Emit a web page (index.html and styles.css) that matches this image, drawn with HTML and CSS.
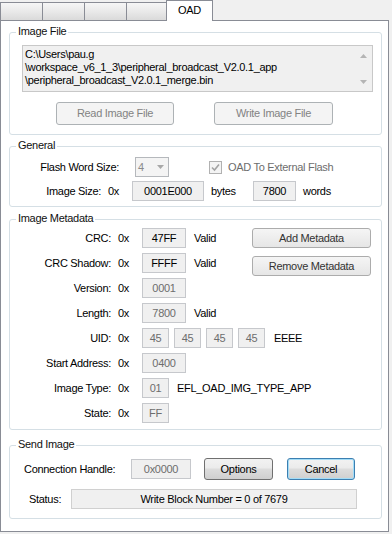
FILE: index.html
```html
<!DOCTYPE html>
<html lang="en">
<head>
    <meta charset="UTF-8">
    <title>OAD</title>
    <link rel="stylesheet" href="styles.css">
</head>
<body>

<!-- tab strip -->
<div class="tabs">
    <div class="tab"></div>
    <div class="tab"></div>
    <div class="tab"></div>
    <div class="tab tab-last"></div>
    <div class="tab tab-active">OAD</div>
</div>

<div class="page">

    <!-- Image File -->
    <div class="group group-file">
        <span class="legend">Image File</span>
        <div class="filebox">
            <div class="filepath">C:\Users\pau.g<br>\workspace_v6_1_3\peripheral_broadcast_V2.0.1_app<br>\peripheral_broadcast_V2.0.1_merge.bin</div>
            <div class="scroll">
                <svg width="7" height="4" viewBox="0 0 7 4"><polygon points="0,4 3.5,0 7,4" fill="#b4b4b4"/></svg>
                <svg width="7" height="4" viewBox="0 0 7 4"><polygon points="0,0 3.5,4 7,0" fill="#b4b4b4"/></svg>
            </div>
        </div>
        <div class="file-buttons">
            <button class="btn btn-disabled btn-read">Read Image File</button>
            <button class="btn btn-disabled btn-write">Write Image File</button>
        </div>
    </div>

    <!-- General -->
    <div class="group group-general">
        <span class="legend">General</span>
        <div class="row">
            <span class="lbl lbl-flash">Flash Word Size:</span>
            <div class="combo">
                <span class="combo-text">4</span>
                <svg width="7" height="4" viewBox="0 0 7 4"><polygon points="0,0 3.5,4 7,0" fill="#a8a8a8"/></svg>
            </div>
            <span class="check">
                <svg width="13" height="13" viewBox="0 0 13 13">
                    <rect x="0.5" y="0.5" width="12" height="12" fill="#f4f4f4" stroke="#b1b1b1"/>
                    <path d="M3 6.5 L5.5 9 L10 3.5" fill="none" stroke="#a3a3a3" stroke-width="1.6"/>
                </svg>
            </span>
            <span class="check-label">OAD To External Flash</span>
        </div>
        <div class="row">
            <span class="lbl lbl-size">Image Size:</span>
            <span class="ox ox-size">0x</span>
            <span class="tb w72">0001E000</span>
            <span class="unit">bytes</span>
            <span class="tb w43">7800</span>
            <span class="unit-words">words</span>
        </div>
    </div>

    <!-- Image Metadata -->
    <div class="group group-meta">
        <span class="legend">Image Metadata</span>
        <div class="meta-rows">
            <div class="mrow">
                <span class="mlabel">CRC:</span><span class="ox">0x</span>
                <span class="tb w44">47FF</span><span class="after">Valid</span>
            </div>
            <div class="mrow">
                <span class="mlabel">CRC Shadow:</span><span class="ox">0x</span>
                <span class="tb w44">FFFF</span><span class="after">Valid</span>
            </div>
            <div class="mrow">
                <span class="mlabel">Version:</span><span class="ox">0x</span>
                <span class="tb tb-dis w44">0001</span>
            </div>
            <div class="mrow">
                <span class="mlabel">Length:</span><span class="ox">0x</span>
                <span class="tb tb-dis w44">7800</span><span class="after">Valid</span>
            </div>
            <div class="mrow">
                <span class="mlabel">UID:</span><span class="ox">0x</span>
                <span class="uid">
                    <span class="tb tb-dis w27">45</span>
                    <span class="tb tb-dis w27">45</span>
                    <span class="tb tb-dis w27">45</span>
                    <span class="tb tb-dis w27">45</span>
                </span>
                <span class="after-uid">EEEE</span>
            </div>
            <div class="mrow">
                <span class="mlabel">Start Address:</span><span class="ox">0x</span>
                <span class="tb tb-dis w44">0400</span>
            </div>
            <div class="mrow">
                <span class="mlabel">Image Type:</span><span class="ox">0x</span>
                <span class="tb tb-dis w27">01</span><span class="after">EFL_OAD_IMG_TYPE_APP</span>
            </div>
            <div class="mrow">
                <span class="mlabel">State:</span><span class="ox">0x</span>
                <span class="tb tb-dis w27">FF</span>
            </div>
        </div>
        <div class="meta-buttons">
            <button class="btn btn-light">Add Metadata</button>
            <button class="btn btn-light">Remove Metadata</button>
        </div>
    </div>

    <!-- Send Image -->
    <div class="group group-send">
        <span class="legend">Send Image</span>
        <div class="srow">
            <span class="lbl-conn">Connection Handle:</span>
            <span class="tb tb-dis w60">0x0000</span>
            <button class="btn btn-normal btn-options">Options</button>
            <button class="btn btn-normal btn-focus btn-cancel">Cancel</button>
        </div>
        <div class="srow srow-status">
            <span class="lbl-status">Status:</span>
            <span class="status-box">Write Block Number = 0 of 7679</span>
        </div>
    </div>

</div>

</body>
</html>
```

FILE: styles.css
```css
body {
    margin: 0;
    background-color: #f0f0f0;
    font-family: "Liberation Sans", Arial, sans-serif;
    font-size: 11px;
    line-height: 13px;
    letter-spacing: -0.3px;
    color: #000000;
}

/* tab strip */
.tabs {
    display: flex;
    align-items: flex-end;
    height: 20px;
}

.tab {
    width: 42px;
    height: 18px;
    box-sizing: border-box;
    border-left: 1px solid #898c95;
    border-top: 1px solid #898c95;
    background: linear-gradient(#f6f6f6, #e9e9e9 50%, #dadada);
}

.tab-last {
    width: 40px;
}

.tab-active {
    position: relative;
    z-index: 1;
    width: 47px;
    height: 21px;
    margin-bottom: -1px;
    border: 1px solid #898c95;
    border-bottom: none;
    background: #ffffff;
    text-align: center;
    line-height: 19px;
}

/* tab page */
.page {
    width: 389px;
    height: 512px;
    box-sizing: border-box;
    border: 1px solid #898c95;
    background-color: #ffffff;
    padding-left: 8px;
}

/* group boxes */
.group {
    position: relative;
    width: 373px;
    box-sizing: border-box;
    border: 1px solid #d5dfe5;
    border-radius: 3px;
}

.legend {
    position: absolute;
    top: -8px;
    left: 6px;
    padding: 0 2px;
    background-color: #ffffff;
    color: #101010;
}

.group-file {
    margin-top: 11px;
    height: 103px;
    padding: 12px 0 0 12px;
}

.filebox {
    display: flex;
    width: 351px;
    height: 47px;
    box-sizing: border-box;
    border: 1px solid #c8c8c8;
    background-color: #f0f0f0;
}

.filepath {
    flex: 1;
    padding: 2px 0 0 2px;
    white-space: nowrap;
    overflow: hidden;
}

.scroll {
    width: 17px;
    display: flex;
    flex-direction: column;
    justify-content: space-between;
    align-items: center;
    padding: 8px 0 7px;
    box-sizing: border-box;
}

.file-buttons {
    display: flex;
    gap: 40px;
    margin-top: 10px;
    padding-left: 34px;
}

.btn {
    box-sizing: border-box;
    padding: 0;
    font: inherit;
    letter-spacing: inherit;
    border-radius: 3px;
}

.btn-disabled {
    border: 1px solid #adb2b5;
    background-color: #f4f4f4;
    color: #838383;
}

.btn-read {
    width: 118px;
    height: 23px;
}

.btn-write {
    width: 119px;
    height: 23px;
}

.btn-light {
    width: 119px;
    height: 20px;
    border: 1px solid #acacac;
    background: linear-gradient(#f5f5f5, #e6e6e6);
    color: #333333;
}

.btn-normal {
    height: 22px;
    border: 1px solid #707070;
    background: linear-gradient(#f2f2f2 0%, #ebebeb 45%, #dddddd 50%, #cfcfcf 100%);
    color: #000000;
}

.btn-focus {
    border-color: #3c7fb1;
    box-shadow: inset 0 0 0 1px #a2dcf7;
}

/* text boxes */
.tb {
    display: inline-block;
    flex-shrink: 0;
    box-sizing: border-box;
    height: 20px;
    border: 1px solid #c6c8cc;
    background-color: #f0f0f0;
    text-align: center;
    line-height: 18px;
}

.tb-dis {
    color: #6d6d6d;
}

.w27 { width: 27px; }
.w43 { width: 43px; }
.w44 { width: 44px; }
.w60 { width: 60px; }
.w72 { width: 72px; }

/* General */
.group-general {
    margin-top: 11px;
    height: 61px;
    padding-top: 10px;
}

.row {
    display: flex;
    align-items: center;
    height: 20px;
}

.row + .row {
    margin-top: 4px;
}

.lbl {
    text-align: right;
}

.lbl-flash {
    width: 109px;
}

.lbl-size {
    width: 91px;
}

.combo {
    display: flex;
    align-items: center;
    justify-content: space-between;
    width: 34px;
    height: 20px;
    margin-left: 16px;
    box-sizing: border-box;
    border: 1px solid #b5b8bc;
    background-color: #f4f4f4;
    padding: 0 4px 0 2px;
    color: #8a8a8a;
}

.check {
    display: flex;
    margin-left: 40px;
}

.check-label {
    margin-left: 6px;
    color: #6d6d6d;
}

.ox-size {
    width: 25px;
    margin-left: 8px;
}

.unit {
    width: 42px;
    margin-left: 7px;
}

.unit-words {
    margin-left: 7px;
}

/* Image Metadata */
.group-meta {
    display: flex;
    margin-top: 12px;
    height: 211px;
    padding-top: 8px;
}

.meta-rows {
    width: 230px;
    flex-shrink: 0;
}

.mrow {
    display: flex;
    align-items: center;
    height: 20px;
    margin-bottom: 5px;
    white-space: nowrap;
}

.mrow > * {
    flex-shrink: 0;
}

.mlabel {
    width: 101px;
    text-align: right;
}

.ox {
    width: 24px;
    margin-left: 7px;
}

.after {
    margin-left: 8px;
}

.uid {
    display: flex;
    gap: 5px;
}

.after-uid {
    margin-left: 9px;
}

.meta-buttons {
    display: flex;
    flex-direction: column;
    gap: 8px;
    margin-left: 12px;
}

/* Send Image */
.group-send {
    margin-top: 15px;
    height: 74px;
    padding-top: 12px;
}

.srow {
    display: flex;
    align-items: center;
    height: 22px;
}

.srow-status {
    height: 20px;
    margin-top: 9px;
}

.lbl-conn {
    width: 107px;
    margin-left: 14px;
}

.btn-options {
    width: 69px;
    margin-left: 13px;
}

.btn-cancel {
    width: 68px;
    margin-left: 14px;
}

.lbl-status {
    width: 42px;
    margin-left: 19px;
}

.status-box {
    width: 286px;
    height: 20px;
    box-sizing: border-box;
    border: 1px solid #d0d0d0;
    background-color: #f0f0f0;
    text-align: center;
    line-height: 18px;
}
```
